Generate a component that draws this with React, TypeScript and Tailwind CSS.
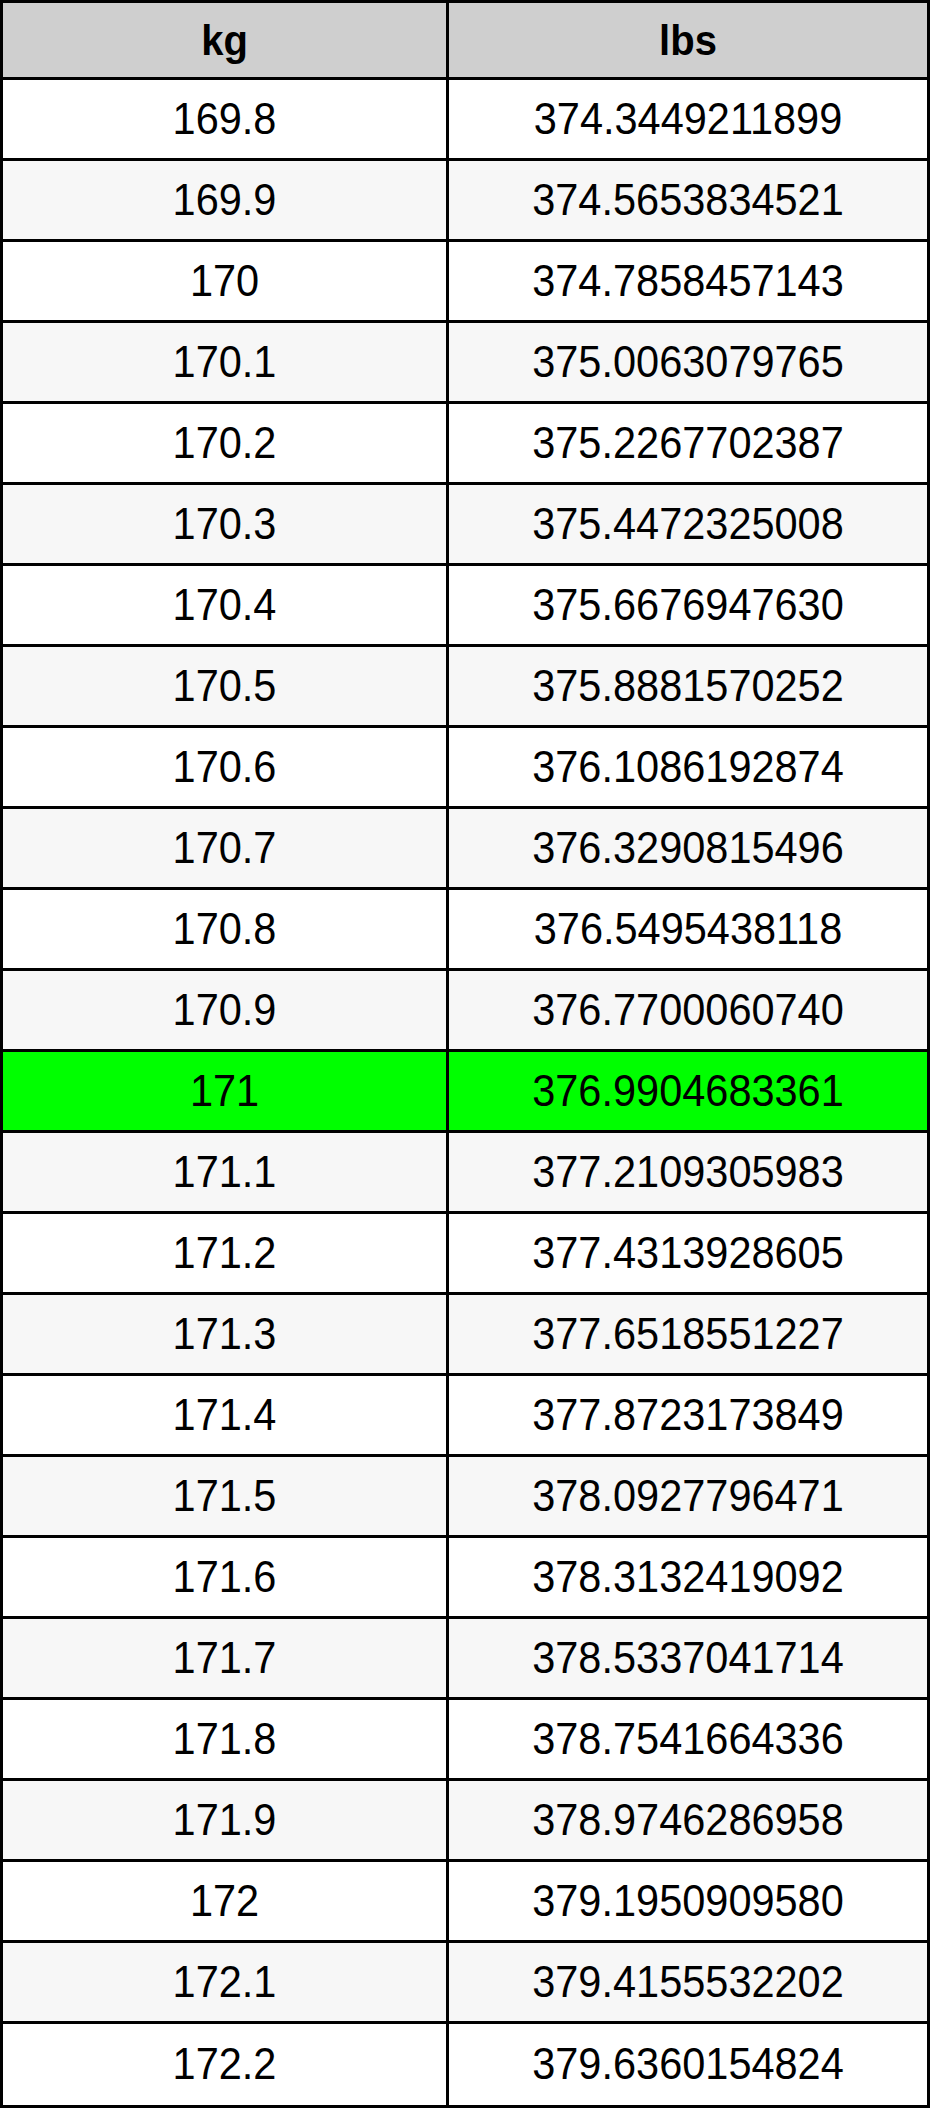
const rows: [string, string][] = [
  ["169.8", "374.3449211899"],
  ["169.9", "374.5653834521"],
  ["170", "374.7858457143"],
  ["170.1", "375.0063079765"],
  ["170.2", "375.2267702387"],
  ["170.3", "375.4472325008"],
  ["170.4", "375.6676947630"],
  ["170.5", "375.8881570252"],
  ["170.6", "376.1086192874"],
  ["170.7", "376.3290815496"],
  ["170.8", "376.5495438118"],
  ["170.9", "376.7700060740"],
  ["171", "376.9904683361"],
  ["171.1", "377.2109305983"],
  ["171.2", "377.4313928605"],
  ["171.3", "377.6518551227"],
  ["171.4", "377.8723173849"],
  ["171.5", "378.0927796471"],
  ["171.6", "378.3132419092"],
  ["171.7", "378.5337041714"],
  ["171.8", "378.7541664336"],
  ["171.9", "378.9746286958"],
  ["172", "379.1950909580"],
  ["172.1", "379.4155532202"],
  ["172.2", "379.6360154824"],
];

export default function App() {
  return (
    <div className="w-[930px] bg-white font-['Liberation_Sans',Arial,sans-serif] text-black">
      <div className="flex flex-col border-[3px] border-black divide-y-[3px] divide-black">
        <div className="flex h-[77px] bg-[#cfcfcf]">
          <div className="w-[446px] border-r-[3px] border-black flex items-center justify-center">
            <span className="text-[40px] font-bold scale-y-[1.08]">kg</span>
          </div>
          <div className="flex-1 flex items-center justify-center">
            <span className="text-[40px] font-bold scale-y-[1.08]">lbs</span>
          </div>
        </div>
        {rows.map(([kg, lbs], i) => (
          <div
            key={kg}
            className={`flex h-[81px] ${
              i === 12 ? "bg-[#00ff00]" : i % 2 === 1 ? "bg-[#f7f7f7]" : "bg-white"
            }`}
          >
            <div className="w-[446px] border-r-[3px] border-black flex items-center justify-center">
              <span className="text-[41.5px] scale-y-[1.08]">{kg}</span>
            </div>
            <div className="flex-1 flex items-center justify-center">
              <span className="text-[41.5px] scale-y-[1.08]">{lbs}</span>
            </div>
          </div>
        ))}
      </div>
    </div>
  );
}
